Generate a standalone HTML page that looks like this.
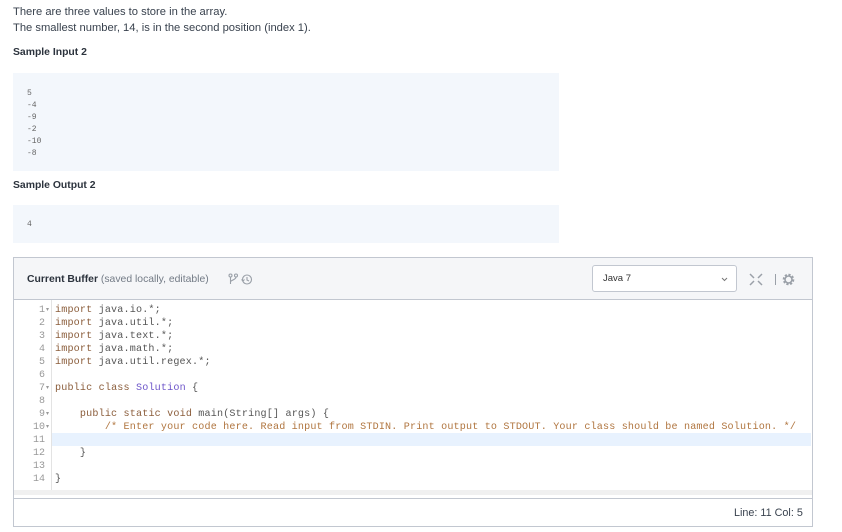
<!DOCTYPE html>
<html><head><meta charset="utf-8"><style>
*{margin:0;padding:0;box-sizing:border-box}
body{width:842px;height:532px;background:#fff;font-family:"Liberation Sans",sans-serif;color:#39424e;position:relative;overflow:hidden}
.t{position:absolute;font-size:10.5px;white-space:nowrap}
.box{position:absolute;left:13px;width:546px;background:#f3f7fc}
.mono{font-family:"Liberation Mono",monospace;font-size:8px;color:#666;line-height:12px;position:absolute;left:14px}
.panel{position:absolute;left:13px;top:257px;width:800px;height:270px;border:1px solid #c2c7d0}
.hdr{position:absolute;left:0;top:0;width:798px;height:42px;background:#f5f6f8;border-bottom:1px solid #c2c7d0}
.code{position:absolute;left:0;top:42px;width:798px;height:194px;background:#fff}
.gut{position:absolute;left:0;top:0;width:38px;height:194px;border-right:1px solid #e3e3e3}
.ln{position:absolute;left:0;width:31px;text-align:right;font-family:"Liberation Mono",monospace;font-size:10px;color:#999;line-height:13px}
.cl{position:absolute;left:41px;font-family:"Liberation Mono",monospace;font-size:10.1px;letter-spacing:0.17px;line-height:13px;white-space:pre;color:#555}
.k{color:#8b5d3b}.c{color:#b0753f}.s{color:#6d55c9}
.foot{position:absolute;left:0;top:240px;width:798px;height:28px;border-top:1px solid #c2c7d0;background:#fff}
</style></head><body>
<div class="t" style="left:13px;top:6px;font-size:11.2px">There are three values to store in the array.</div>
<div class="t" style="left:13px;top:22px;font-size:11.2px">The smallest number, 14, is in the second position (index 1).</div>
<div class="t" style="left:13px;top:47px;color:#2c333d;font-weight:bold;font-size:10.4px">Sample Input 2</div>
<div class="box" style="top:73px;height:98px"><div class="mono" style="top:15px">5<br>-4<br>-9<br>-2<br>-10<br>-8</div></div>
<div class="t" style="left:13px;top:180px;color:#2c333d;font-weight:bold;font-size:10.4px">Sample Output 2</div>
<div class="box" style="top:205px;height:38px"><div class="mono" style="top:14px">4</div></div>
<div class="panel">
 <div class="hdr">
  <div class="t" style="left:13px;top:16px;font-size:10.4px"><b style="color:#2c333d">Current Buffer</b> <span style="color:#737b86">(saved locally, editable)</span></div>
  <svg style="position:absolute;left:214px;top:15px" width="26" height="13" viewBox="0 0 26 13" fill="none" stroke="#9aa0a8" stroke-width="1.1"><circle cx="2.5" cy="2.5" r="1.5"/><circle cx="8" cy="2.5" r="1.5"/><path d="M2.5 4v7M8 4c0 3-5.5 3-5.5 5"/><circle cx="19" cy="6.5" r="4.5"/><path d="M19 4v3l2 1M13.5 6.5l1.5 1.5 1.5-1.5"/></svg>
  <div style="position:absolute;left:578px;top:7px;width:145px;height:27px;border:1px solid #c2c7d0;border-radius:3px;background:#fff">
   <div class="t" style="left:10px;top:7px;font-size:9.5px;color:#333">Java 7</div>
   <svg style="position:absolute;left:128px;top:11px" width="7" height="5"><path d="M1 1l2.5 2.5L6 1" stroke="#777" fill="none"/></svg>
  </div>
  <svg style="position:absolute;left:735px;top:15px" width="14" height="13" stroke="#9aa0a8" stroke-width="1.5" fill="none"><path d="M1 1l4 4M13 1l-4 4M1 12l4-4M13 12l-4-4"/></svg>
  <div style="position:absolute;left:761px;top:16px;width:1px;height:11px;background:#9aa0a8"></div>
  <svg style="position:absolute;left:768px;top:15px" width="13" height="13" viewBox="0 0 13 13"><circle cx="6.5" cy="6.5" r="4.5" fill="none" stroke="#9aa0a8" stroke-width="2.6" stroke-dasharray="2 1.5"/><circle cx="6.5" cy="6.5" r="3.5" fill="none" stroke="#9aa0a8" stroke-width="1.6"/></svg>
 </div>
 <div class="code">
  <div style="position:absolute;left:38px;top:133px;width:759px;height:13px;background:#e8f2fe"></div>
  <div class="gut"></div>
  <div class="ln" style="top:4px">1<br>2<br>3<br>4<br>5<br>6<br>7<br>8<br>9<br>10<br>11<br>12<br>13<br>14</div>
  <div style="position:absolute;left:32px;top:4px;font-size:6px;color:#999;line-height:13px">▾<br><br><br><br><br><br>▾<br><br>▾<br>▾</div>
  <div class="cl" style="top:4px"><span class="k">import</span> java.io.*;
<span class="k">import</span> java.util.*;
<span class="k">import</span> java.text.*;
<span class="k">import</span> java.math.*;
<span class="k">import</span> java.util.regex.*;

<span class="k">public</span> <span class="k">class</span> <span class="s">Solution</span> {

    <span class="k">public</span> <span class="k">static</span> <span class="k">void</span> main(String[] args) {
        <span class="c">/* Enter your code here. Read input from STDIN. Print output to STDOUT. Your class should be named Solution. */</span>

    }

}</div>
  <div style="position:absolute;left:0;top:190px;width:798px;height:5px;background:#f0f0f0"></div>
 </div>
 <div class="foot"><div class="t" style="left:720px;top:8px;font-size:10.8px;color:#39424e">Line: 11 Col: 5</div></div>
</div>
</body></html>
